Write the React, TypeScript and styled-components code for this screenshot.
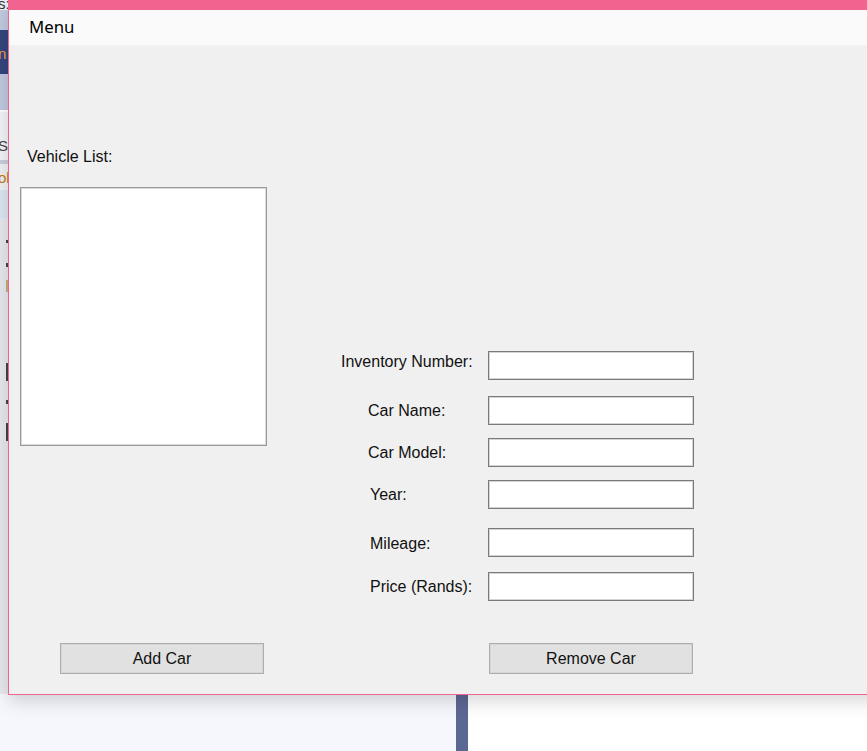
import React from "react";
import styled, { createGlobalStyle } from "styled-components";

const Global = createGlobalStyle`
  html, body { margin: 0; padding: 0; overflow: hidden; }
  body { width: 867px; height: 751px; font-family: "Liberation Sans", Arial, sans-serif; }
  #root { width: 867px; height: 751px; }
`;

const Desktop = styled.div`
  position: relative;
  width: 867px;
  height: 751px;
  overflow: hidden;
  display: grid;
  grid-template-columns: 456px 12px 1fr;
`;

const BackLeft = styled.div`
  background: #f5f7fc;
  display: flex;
  flex-direction: column;
`;

const BackBar = styled.div`
  background: #5c6894;
`;

const BackRight = styled.div`
  background: #ffffff;
`;

const StripBlock = styled.div<{ $h: number; $bg: string }>`
  width: 8px;
  height: ${(p) => p.$h}px;
  background: ${(p) => p.$bg};
  position: relative;
  overflow: hidden;
`;

const StripGlyph = styled.span<{ $c: string; $top: number }>`
  position: absolute;
  left: -2px;
  top: ${(p) => p.$top}px;
  font-size: 15px;
  line-height: 1;
  color: ${(p) => p.$c};
  font-family: "Liberation Sans", Arial, sans-serif;
`;

const StripMark = styled.div<{ $top: number; $h: number; $c: string }>`
  position: absolute;
  left: 6px;
  top: ${(p) => p.$top}px;
  width: 2px;
  height: ${(p) => p.$h}px;
  background: ${(p) => p.$c};
`;

const Window = styled.div`
  position: absolute;
  left: 8px;
  top: 0;
  width: 880px;
  height: 694px;
  border-left: 1px solid #f06490;
  border-bottom: 1px solid #f06490;
  background: #f0f0f0;
  display: flex;
  flex-direction: column;
  box-shadow: 0 6px 18px rgba(0, 0, 0, 0.16);
`;

const TitleBar = styled.div`
  height: 10px;
  background: #f2638f;
  flex: none;
`;

const MenuBar = styled.div`
  height: 35px;
  background: #fafafa;
  border-bottom: 1px solid #f2f2f2;
  display: flex;
  align-items: center;
  padding-left: 20px;
  flex: none;
`;

const MenuItem = styled.span`
  font-family: "Noto Sans", "Open Sans", sans-serif;
  font-size: 16.8px;
  color: #000;
  margin-bottom: 3px;
`;

const Body = styled.div`
  flex: 1;
  display: flex;
  flex-direction: column;
  padding-left: 11px;
`;

const MainRow = styled.div`
  display: flex;
  align-items: flex-start;
`;

const LeftColumn = styled.div`
  display: flex;
  flex-direction: column;
  width: 247px;
  padding-top: 102px;
`;

const Caption = styled.div`
  font-size: 16px;
  color: #111;
  padding-left: 7px;
  height: 17px;
  line-height: 17px;
`;

const ListBox = styled.div`
  margin-top: 22px;
  height: 257px;
  background: #fff;
  border: 1px solid #9a9a9a;
  box-shadow: inset 0 0 0 1px #d9d9d9;
`;

const Form = styled.div`
  display: flex;
  flex-direction: column;
  margin-left: 74px;
  padding-top: 305px;
`;

const FieldRow = styled.div<{ $gap: number }>`
  display: flex;
  align-items: center;
  margin-top: ${(p) => p.$gap}px;
`;

const FieldLabel = styled.div<{ $indent: number; $shift: number }>`
  width: ${(p) => 147 - p.$indent}px;
  padding-left: ${(p) => p.$indent}px;
  font-size: 16px;
  color: #111;
  white-space: nowrap;
  position: relative;
  top: ${(p) => p.$shift}px;
`;

const TextBox = styled.div`
  width: 204px;
  height: 27px;
  background: #fff;
  border: 1px solid #7a7a7a;
  box-shadow: inset 0 0 0 1px #d4d4d4;
`;

const ButtonRow = styled.div`
  display: flex;
  margin-top: 42px;
  padding-left: 40px;
`;

const Button = styled.button<{ $gap?: number }>`
  width: 204px;
  height: 31px;
  margin-left: ${(p) => p.$gap ?? 0}px;
  background: #e1e1e1;
  border: 1px solid #adadad;
  box-shadow: inset 0 0 0 1px #d6d6d6;
  font-family: "Liberation Sans", Arial, sans-serif;
  font-size: 16px;
  color: #111;
  padding: 0;
  display: flex;
  align-items: center;
  justify-content: center;
`;

const fields = [
  { label: "Inventory Number:", indent: 0, gap: 0, shift: -4 },
  { label: "Car Name:", indent: 27, gap: 16, shift: 0 },
  { label: "Car Model:", indent: 27, gap: 13, shift: 0 },
  { label: "Year:", indent: 29, gap: 13, shift: 0 },
  { label: "Mileage:", indent: 29, gap: 19, shift: 1 },
  { label: "Price (Rands):", indent: 29, gap: 15, shift: 0 },
];

export default function App() {
  return (
    <>
      <Global />
      <Desktop>
        <BackLeft>
          <StripBlock $h={10} $bg="#eef0f6">
            <StripGlyph $c="#333" $top={-4}>s:</StripGlyph>
          </StripBlock>
          <StripBlock $h={20} $bg="#c3cbe2" />
          <StripBlock $h={44} $bg="#33467e">
            <StripGlyph $c="#e9a13a" $top={16}>n</StripGlyph>
          </StripBlock>
          <StripBlock $h={36} $bg="#c2c9df" />
          <StripBlock $h={2} $bg="#ffffff" />
          <StripBlock $h={48} $bg="#f4f5f8">
            <StripGlyph $c="#444" $top={26}>Sc</StripGlyph>
          </StripBlock>
          <StripBlock $h={4} $bg="#c8cedf" />
          <StripBlock $h={26} $bg="#f0f1f5">
            <StripGlyph $c="#c27a17" $top={6}>ol</StripGlyph>
          </StripBlock>
          <StripBlock $h={28} $bg="#dce6f4" />
          <StripBlock $h={476} $bg="#e7e9ef">
            <StripMark $top={22} $h={3} $c="#444" />
            <StripMark $top={45} $h={4} $c="#444" />
            <StripMark $top={62} $h={12} $c="#c9ae7c" />
            <StripMark $top={145} $h={18} $c="#444" />
            <StripMark $top={182} $h={4} $c="#444" />
            <StripMark $top={205} $h={18} $c="#444" />
          </StripBlock>
        </BackLeft>
        <BackBar />
        <BackRight />
        <Window>
          <TitleBar />
          <MenuBar>
            <MenuItem>Menu</MenuItem>
          </MenuBar>
          <Body>
            <MainRow>
              <LeftColumn>
                <Caption>Vehicle List:</Caption>
                <ListBox />
              </LeftColumn>
              <Form>
                {fields.map((f) => (
                  <FieldRow key={f.label} $gap={f.gap}>
                    <FieldLabel $indent={f.indent} $shift={f.shift}>
                      {f.label}
                    </FieldLabel>
                    <TextBox />
                  </FieldRow>
                ))}
              </Form>
            </MainRow>
            <ButtonRow>
              <Button>Add Car</Button>
              <Button $gap={225}>Remove Car</Button>
            </ButtonRow>
          </Body>
        </Window>
      </Desktop>
    </>
  );
}
